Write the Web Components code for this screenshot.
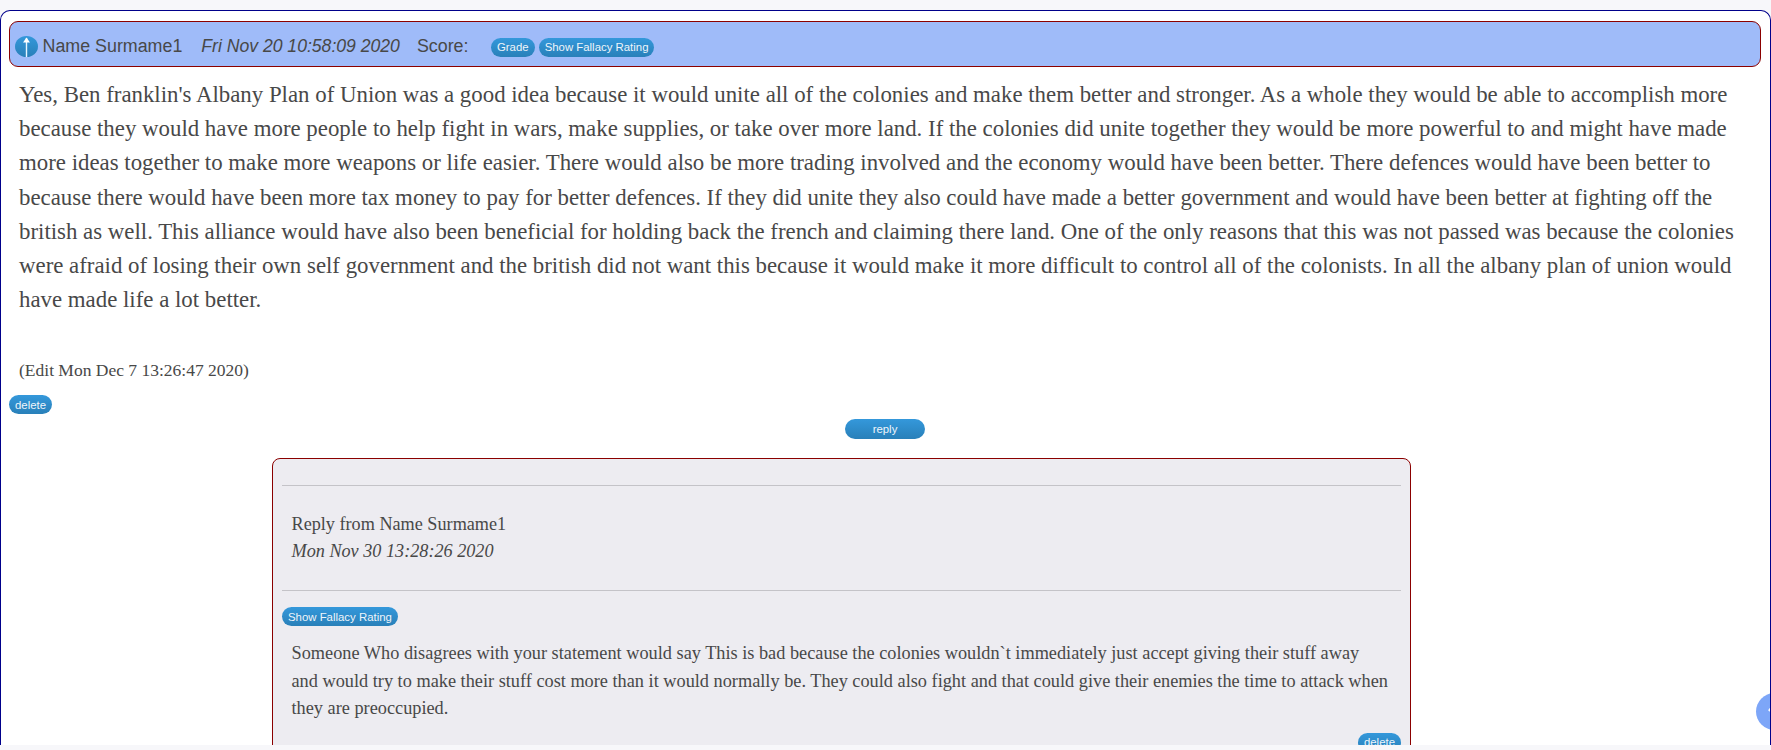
<!DOCTYPE html>
<html><head><meta charset="utf-8"><title>Post</title>
<style>
html,body{margin:0;padding:0;background:#f7f7fa;height:750px;overflow:hidden}
</style></head><body>
<template id="btn-t"><style>
:host{display:inline-flex;align-items:center;justify-content:center;height:19px;padding:0 6px;border-radius:10px;background:linear-gradient(#3498db,#2980b9);color:#eef5fb;font:11.4px "Liberation Sans",Arial,sans-serif;white-space:nowrap;box-sizing:border-box}
:host([wide]){width:80px;height:20px}
</style><slot></slot></template>

<template id="icon-t"><style>
:host{display:inline-block;width:23px;height:21px}
svg{display:block}
</style><svg width="23" height="21" viewBox="0 0 23 21"><defs><linearGradient id="g" x1="0" y1="0" x2="0" y2="1"><stop offset="0" stop-color="#3498db"/><stop offset="1" stop-color="#2980b9"/></linearGradient></defs><ellipse cx="11.5" cy="10.5" rx="11.5" ry="10.5" fill="url(#g)"/><path d="M11.5 2V21" stroke="#e6f6ff" stroke-width="1.4"/><path d="M8 6.5L11.5 1.5L15 6.5Z" fill="#fff"/></svg></template>

<template id="head-t"><style>
:host{display:flex;align-items:center;height:46px;box-sizing:border-box;border:1.5px solid #8b0000;border-radius:9px;background:#9fbbf9;padding:5px 0 0 5px;color:#484848;font:17.85px "Liberation Sans",Arial,sans-serif}
.n{margin-left:4.5px}.d{font-style:italic;font-size:17.6px;margin-left:19px}.s{margin-left:17px}
.b{margin-left:22.5px;margin-top:1px;display:inline-flex;gap:4px}
</style><x-up></x-up><span class="n">Name Surmame1</span><span class="d">Fri Nov 20 10:58:09 2020</span><span class="s">Score:</span><span class="b"><x-btn>Grade</x-btn><x-btn>Show Fallacy Rating</x-btn></span></template>

<template id="post-t"><style>
:host{display:block;margin:11px 0 0 0;padding:0 10px;font:22.85px/34.2px "Liberation Serif","Times New Roman",serif;color:#484848}
p{margin:0}
.e{font-size:17.5px;line-height:24px;margin-top:41px}
</style><p><slot></slot></p><div class="e"><slot name="edit"></slot></div></template>

<template id="reply-t"><style>
:host{display:block;width:1139px;box-sizing:border-box;margin:19px 0 0 263px;border:1px solid #8b0000;border-radius:8px;background:#edecf1;padding:26px 9px 0;color:#484848;font:18.2px/27px "Liberation Serif","Times New Roman",serif}
.rule{height:1px;background:#c4c3c8}
.by{padding:25px 10px 25px 9.5px}
.by i{display:block}
.fb{display:flex;margin-top:16px}
.t{padding:14px 5px 0 9.5px;margin:0;font-size:18.3px;line-height:27.5px}
.del{display:flex;justify-content:flex-end;margin-top:10px}
</style><div class="rule"></div><div class="by"><slot name="by"></slot><i><slot name="date"></slot></i></div><div class="rule"></div><div class="fb"><x-btn>Show Fallacy Rating</x-btn></div><p class="t"><slot></slot></p><div class="del"><x-btn>delete</x-btn></div></template>

<template id="card-t"><style>
:host{display:block;height:735px;margin-top:10px;box-sizing:border-box;overflow:hidden;background:#fff;border:1px solid #00008b;border-bottom:0;border-radius:10px 10px 0 0;padding:10px 9px 0 8px;position:relative}
.top{position:absolute;left:1755px;top:682px;width:37px;height:37px;border-radius:50%;background:#7da6f8}
.top svg{display:block}
</style><slot></slot><div class="top"><svg width="37" height="37" viewBox="0 0 37 37"><path d="M18.5 11L13 18M18.5 11L24 18M18.5 11V27" fill="none" stroke="#fff" stroke-width="2.4"/></svg></div></template>

<x-card>
  <x-head></x-head>
  <x-post>Yes, Ben franklin's Albany Plan of Union was a good idea because it would unite all of the colonies and make them better and stronger. As a whole they would be able to accomplish more because they would have more people to help fight in wars, make supplies, or take over more land. If the colonies did unite together they would be more powerful to and might have made more ideas together to make more weapons or life easier. There would also be more trading involved and the economy would have been better. There defences would have been better to because there would have been more tax money to pay for better defences. If they did unite they also could have made a better government and would have been better at fighting off the british as well. This alliance would have also been beneficial for holding back the french and claiming there land. One of the only reasons that this was not passed was because the colonies were afraid of losing their own self government and the british did not want this because it would make it more difficult to control all of the colonists. In all the albany plan of union would have made life a lot better.<span slot="edit">(Edit Mon Dec 7 13:26:47 2020)</span></x-post>
  <x-row kind="del"><x-btn>delete</x-btn></x-row>
  <x-row kind="rep"><x-btn wide>reply</x-btn></x-row>
  <x-reply><span slot="by">Reply from Name Surmame1</span><span slot="date">Mon Nov 30 13:28:26 2020</span>Someone Who disagrees with your statement would say This is bad because the colonies wouldn`t immediately just accept giving their stuff away<br>and would try to make their stuff cost more than it would normally be. They could also fight and that could give their enemies the time to attack when they are preoccupied.</x-reply>
</x-card>
<script>
function def(name,tid){customElements.define(name,class extends HTMLElement{constructor(){super();this.attachShadow({mode:'open'}).appendChild(document.getElementById(tid).content.cloneNode(true));}});}
customElements.define('x-row',class extends HTMLElement{constructor(){super();const s=this.attachShadow({mode:'open'});const k=this.getAttribute('kind');s.innerHTML='<style>:host{display:flex;'+(k==='rep'?'justify-content:center;margin-top:5px':'margin-top:13px')+'}</style><slot></slot>';}});
def('x-btn','btn-t');def('x-up','icon-t');def('x-head','head-t');def('x-post','post-t');def('x-reply','reply-t');def('x-card','card-t');
</script>
</body></html>
